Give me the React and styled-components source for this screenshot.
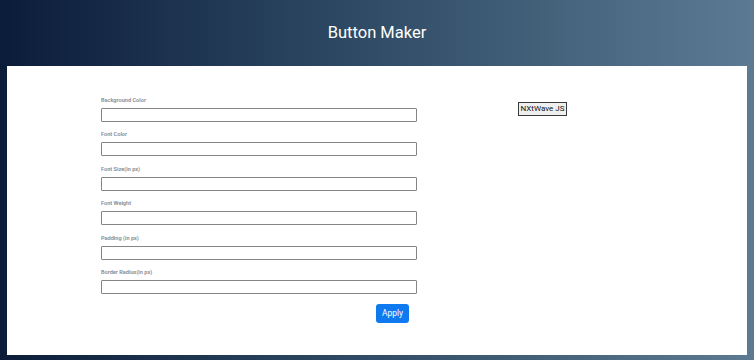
import React, { useState } from 'react'
import styled, { createGlobalStyle } from 'styled-components'

const GlobalStyle = createGlobalStyle`
  body {
    margin: 0;
    font-family: 'Roboto', 'Liberation Sans', sans-serif;
  }
`

const fields = [
  { id: 'bgColor', label: 'Background Color' },
  { id: 'fontColor', label: 'Font Color' },
  { id: 'fontSize', label: 'Font Size(in px)' },
  { id: 'fontWeight', label: 'Font Weight' },
  { id: 'padding', label: 'Padding (in px)' },
  { id: 'radius', label: 'Border Radius(in px)' },
]

function App() {
  const [values, setValues] = useState({})

  const onChange = (id, value) => setValues({ ...values, [id]: value })

  return (
    <Page>
      <GlobalStyle />
      <Title>Button Maker</Title>
      <Card>
        <Form onSubmit={e => e.preventDefault()}>
          {fields.map(field => (
            <Field key={field.id}>
              <Label htmlFor={field.id}>{field.label}</Label>
              <Input
                id={field.id}
                value={values[field.id] || ''}
                onChange={e => onChange(field.id, e.target.value)}
              />
            </Field>
          ))}
          <ApplyButton type="submit">Apply</ApplyButton>
        </Form>
        <Preview>
          <PreviewButton type="button">NXtWave JS</PreviewButton>
        </Preview>
      </Card>
    </Page>
  )
}

const Page = styled.div`
  width: 754px;
  height: 360px;
  box-sizing: border-box;
  padding: 0 7px 5px 7px;
  background: linear-gradient(90deg, #0b1c39 0%, #2d4862 45%, #5c7b93 100%);
  display: flex;
  flex-direction: column;
`

const Title = styled.h1`
  margin: 0;
  height: 66px;
  line-height: 66px;
  text-align: center;
  color: #ffffff;
  font-size: 16.5px;
  font-weight: 400;
`

const Card = styled.div`
  flex: 1;
  background-color: #ffffff;
  display: flex;
  align-items: flex-start;
  padding: 30px 0 0 94px;
`

const Form = styled.form`
  width: 316px;
  display: flex;
  flex-direction: column;
`

const Field = styled.div`
  display: flex;
  flex-direction: column;
  margin-bottom: 8.4px;
`

const Label = styled.label`
  font-size: 5.6px;
  line-height: 8px;
  font-weight: 600;
  color: #858b93;
  margin-bottom: 4px;
`

const Input = styled.input`
  box-sizing: border-box;
  width: 316px;
  height: 14px;
  margin: 0;
  padding: 0 3px;
  border: 1px solid #858585;
  border-radius: 1px;
  font-size: 8px;
  outline: none;
`

const ApplyButton = styled.button`
  align-self: flex-end;
  margin: 1.6px 8px 0 0;
  width: 33px;
  height: 19px;
  padding: 0;
  border: none;
  border-radius: 3px;
  background-color: #0f7af0;
  color: #ffffff;
  font-family: 'Roboto', 'Liberation Sans', sans-serif;
  font-size: 8.5px;
  cursor: pointer;
`

const Preview = styled.div`
  display: flex;
  align-items: flex-start;
  margin-left: 101px;
  padding-top: 6px;
`

const PreviewButton = styled.button`
  box-sizing: border-box;
  width: 49px;
  height: 14px;
  padding: 0;
  border: 1px solid #3a3a3a;
  background-color: #efefef;
  color: #111111;
  font-family: 'Roboto', 'Liberation Sans', sans-serif;
  font-size: 8px;
  font-weight: 400;
  line-height: 12px;
`

export default App
